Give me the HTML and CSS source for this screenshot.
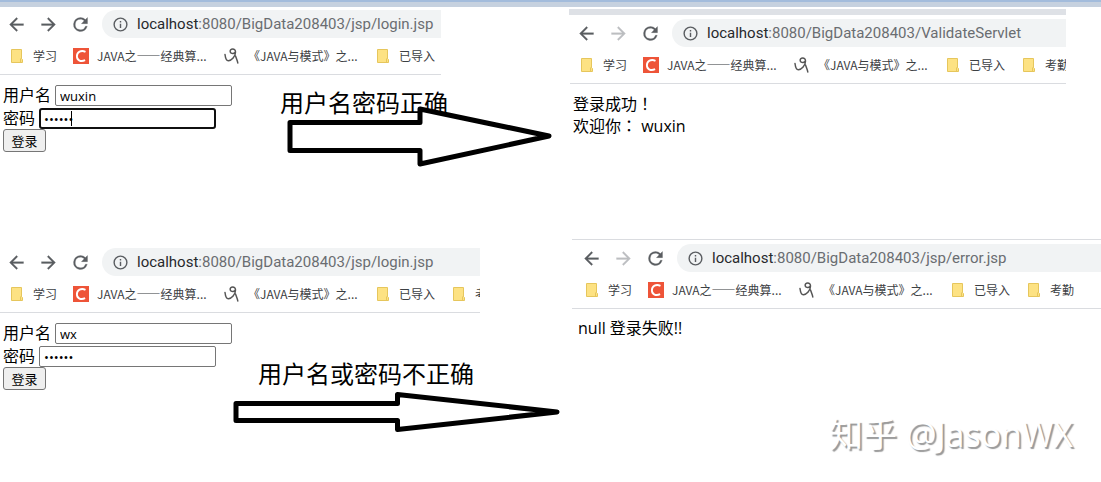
FILE: index.html
```
<!doctype html>
<html lang="zh">
    <head>
        <meta charset="utf-8"/>
        <title>登录验证</title>
        <link rel="stylesheet" href="styles.css">
    </head>
    <body>
        <!-- 公用图标 -->
        <svg class="sprite" aria-hidden="true">
            <symbol id="back" viewBox="0 0 24 24"><path d="M20 11H7.83l5.59-5.59L12 4l-8 8 8 8 1.41-1.41L7.83 13H20v-2z"/></symbol>
            <symbol id="forward" viewBox="0 0 24 24"><path d="M12 4l-1.41 1.41L16.17 11H4v2h12.17l-5.58 5.59L12 20l8-8z"/></symbol>
            <symbol id="reload" viewBox="0 0 24 24"><path d="M17.65 6.35A7.96 7.96 0 0 0 12 4a8 8 0 1 0 7.73 10h-2.08A6 6 0 1 1 12 6c1.66 0 3.14.69 4.22 1.78L13 11h7V4l-2.35 2.35z"/></symbol>
            <symbol id="info" viewBox="0 0 24 24"><path d="M11 7h2v2h-2zm0 4h2v6h-2zm1-9a10 10 0 1 0 0 20 10 10 0 0 0 0-20zm0 18a8 8 0 1 1 0-16 8 8 0 0 1 0 16z"/></symbol>
            <symbol id="folder" viewBox="0 0 16 16"><path d="M2.500 1.500h10v9l1 1v3h-11z" fill="#fde283" stroke="#e6c65c"/><path d="M11.500 14v-3l1-1" fill="none" stroke="#e6c65c"/></symbol>
            <symbol id="csdn" viewBox="0 0 16 16"><path d="M0 0h16v16H0z" fill="#ee5438"/><path d="M12.500 3.800C8 1.700 3.900 4 3.900 8.200c0 4.200 4 6 8.200 4" fill="none" stroke="#fff" stroke-width="1.900"/></symbol>
            <symbol id="eye" viewBox="0 0 16 16"><path d="M1 6.500c.5 4 1.500 6.500 3.500 6.300 3-.3 7-4 7-8.800C11.500 2.200 10.300 1 8.700 1 7 1 6 2.200 6.200 3.600c.2 1.500 1.600 2.200 3 1.900 1.200-.3 1.900-.9 2.200-1.600M11.500 8c.8 2.500 1.900 4.500 2.300 7" fill="none" stroke="#555" stroke-width="1.500" stroke-linecap="round"/></symbol>
        </svg>
        <header class="strip"></header>
        <main>
            <section class="cell">
                <div class="browser login-ok">
                    <nav class="toolbar">
                        <button class="tool" aria-label="后退"><svg><use href="#back"/></svg></button>
                        <button class="tool" aria-label="前进"><svg><use href="#forward"/></svg></button>
                        <button class="tool" aria-label="刷新"><svg><use href="#reload"/></svg></button>
                        <div class="address"><svg><use href="#info"/></svg><span><b>localhost</b>:8080/BigData208403/jsp/login.jsp</span></div>
                    </nav>
                    <nav class="bookmarks">
                        <a href="#"><svg><use href="#folder"/></svg>学习</a>
                        <a href="#"><svg><use href="#csdn"/></svg><span class="long">JAVA之——经典算...</span></a>
                        <a href="#"><svg><use href="#eye"/></svg><span class="long">《JAVA与模式》之...</span></a>
                        <a href="#"><svg><use href="#folder"/></svg>已导入</a>
                    </nav>
                    <form class="page">
                        <div class="field"><label for="name1">用户名</label> <input id="name1" type="text" value="wuxin"></div>
                        <div class="field"><label for="pwd1">密码</label> <span class="focus"><input id="pwd1" type="password" value="123456"></span></div>
                        <button class="submit" type="button">登录</button>
                    </form>
                </div>
                <figure class="note note-ok">
                    <figcaption>用户名密码正确</figcaption>
                    <svg width="272" height="64" viewBox="284 105 272 64"><path d="M290 122.500H420V109L549 136 420 164V150.500H290z"/></svg>
                </figure>
            </section>
            <section class="cell">
                <div class="browser success">
                    <nav class="toolbar">
                        <button class="tool" aria-label="后退"><svg><use href="#back"/></svg></button>
                        <button class="tool" aria-label="前进" disabled><svg><use href="#forward"/></svg></button>
                        <button class="tool" aria-label="刷新"><svg><use href="#reload"/></svg></button>
                        <div class="address"><svg><use href="#info"/></svg><span><b>localhost</b>:8080/BigData208403/ValidateServlet</span></div>
                    </nav>
                    <nav class="bookmarks">
                        <a href="#"><svg><use href="#folder"/></svg>学习</a>
                        <a href="#"><svg><use href="#csdn"/></svg><span class="long">JAVA之——经典算...</span></a>
                        <a href="#"><svg><use href="#eye"/></svg><span class="long">《JAVA与模式》之...</span></a>
                        <a href="#"><svg><use href="#folder"/></svg>已导入</a>
                        <a href="#"><svg><use href="#folder"/></svg>考勤</a>
                    </nav>
                    <div class="page">
                        <p>登录成功<span class="mark" lang="zh-TW">！</span></p>
                        <p>欢迎你<span class="mark" lang="zh-TW">：</span> wuxin</p>
                    </div>
                </div>
            </section>
            <section class="cell">
                <div class="browser login-fail">
                    <nav class="toolbar">
                        <button class="tool" aria-label="后退"><svg><use href="#back"/></svg></button>
                        <button class="tool" aria-label="前进"><svg><use href="#forward"/></svg></button>
                        <button class="tool" aria-label="刷新"><svg><use href="#reload"/></svg></button>
                        <div class="address"><svg><use href="#info"/></svg><span><b>localhost</b>:8080/BigData208403/jsp/login.jsp</span></div>
                    </nav>
                    <nav class="bookmarks">
                        <a href="#"><svg><use href="#folder"/></svg>学习</a>
                        <a href="#"><svg><use href="#csdn"/></svg><span class="long">JAVA之——经典算...</span></a>
                        <a href="#"><svg><use href="#eye"/></svg><span class="long">《JAVA与模式》之...</span></a>
                        <a href="#"><svg><use href="#folder"/></svg>已导入</a>
                        <a href="#"><svg><use href="#folder"/></svg>考勤</a>
                    </nav>
                    <form class="page">
                        <div class="field"><label for="name2">用户名</label> <input id="name2" type="text" value="wx"></div>
                        <div class="field"><label for="pwd2">密码</label> <input id="pwd2" type="password" value="123456"></div>
                        <button class="submit" type="button">登录</button>
                    </form>
                </div>
                <figure class="note note-fail">
                    <figcaption>用户名或密码不正确</figcaption>
                    <svg width="332" height="44" viewBox="230 390 332 44"><path d="M236 403.500H397.500V394.500L557 412 397.500 429.500V420.500H236z"/></svg>
                </figure>
            </section>
            <section class="cell">
                <div class="browser error">
                    <nav class="toolbar">
                        <button class="tool" aria-label="后退"><svg><use href="#back"/></svg></button>
                        <button class="tool" aria-label="前进" disabled><svg><use href="#forward"/></svg></button>
                        <button class="tool" aria-label="刷新"><svg><use href="#reload"/></svg></button>
                        <div class="address"><svg><use href="#info"/></svg><span><b>localhost</b>:8080/BigData208403/jsp/error.jsp</span></div>
                    </nav>
                    <nav class="bookmarks">
                        <a href="#"><svg><use href="#folder"/></svg>学习</a>
                        <a href="#"><svg><use href="#csdn"/></svg><span class="long">JAVA之——经典算...</span></a>
                        <a href="#"><svg><use href="#eye"/></svg><span class="long">《JAVA与模式》之...</span></a>
                        <a href="#"><svg><use href="#folder"/></svg>已导入</a>
                        <a href="#"><svg><use href="#folder"/></svg>考勤</a>
                    </nav>
                    <div class="page">
                        <p>null 登录失败!!</p>
                    </div>
                </div>
                <p class="watermark">知乎 @JasonWX</p>
            </section>
        </main>
    </body>
</html>
```
FILE: styles.css
```
* {
    margin: 0;
    padding: 0;
    box-sizing: border-box;
}
body {
    background-color: #fff;
    color: #000;
    font-family: "Noto Sans CJK SC", sans-serif;
    font-size: 16px;
}
.sprite {
    display: none;
}
.strip {
    height: 7px;
    background-color: #c6d1df;
    border-top: 2px solid #a3bcdc;
}
main {
    display: grid;
    grid-template-columns: 569fr 532fr;
    grid-template-rows: 232px auto;
}
.cell {
    position: relative;
    display: flex;
    flex-direction: column;
    min-width: 0;
}
.browser {
    overflow: hidden;
}
.login-ok {
    width: 77.5%;
    padding-top: 3px;
}
.login-fail {
    width: 84.4%;
    padding-top: 9px;
}
.success {
    width: 93.5%;
    margin-top: 2px;
    border-top: 6px solid #dee1e6;
    padding-top: 4px;
    padding-left: 1px;
}
.error {
    margin-left: 3px;
    border-top: 1px solid #dadce0;
    padding-top: 4px;
    padding-left: 3px;
}
.toolbar {
    display: flex;
    align-items: center;
    gap: 11px;
    padding-left: 6px;
    height: 28px;
}
.tool {
    flex: none;
    display: flex;
    border: 0;
    background: none;
}
.tool svg {
    width: 21px;
    height: 21px;
    fill: #5a5d61;
    stroke: #5a5d61;
    stroke-width: 0.3;
}
.tool:disabled svg {
    fill: #bcbec1;
    stroke: #bcbec1;
}
.address {
    flex: 1;
    display: flex;
    align-items: center;
    gap: 8px;
    height: 28px;
    padding-left: 10px;
    border-radius: 14px 0 0 14px;
    background-color: #f1f3f4;
    color: #6a6d71;
    font-family: Roboto, sans-serif;
    font-size: 15px;
    white-space: nowrap;
}
.address svg {
    width: 17px;
    height: 17px;
    fill: #5a5d61;
}
.address b {
    color: #27292c;
    font-weight: normal;
}
.bookmarks {
    display: flex;
    align-items: center;
    gap: 16px;
    height: 37px;
    padding-left: 9px;
    border-bottom: 1px solid #dadce0;
}
.error .bookmarks {
    margin-left: -3px;
    padding-left: 12px;
}
.bookmarks a {
    flex: none;
    display: flex;
    align-items: center;
    gap: 8px;
    color: #3c4043;
    font-size: 12px;
    line-height: 16px;
    text-decoration: none;
    white-space: nowrap;
}
.bookmarks svg {
    width: 16px;
    height: 16px;
}
.bookmarks .long {
    width: 111px;
}
.page {
    padding: 8px 3px;
    font-family: "Open Sans", "Noto Sans CJK SC", sans-serif;
}
.page p {
    padding-top: 1px;
    line-height: 20px;
}
/* 标点居中显示 */
.mark {
    font-family: "Noto Sans CJK TC", sans-serif;
}
.field {
    display: flex;
    align-items: flex-end;
    gap: 4px;
    height: 23px;
}
.field label {
    line-height: 23px;
    font-family: "Noto Sans CJK SC", sans-serif;
}
.field input {
    display: block;
    width: 177px;
    height: 21px;
    padding: 0 4px;
    border: 1px solid #767676;
    border-radius: 2px;
    font-family: "Open Sans", sans-serif;
    font-size: 13px;
}
.focus {
    position: relative;
    display: flex;
}
.field .focus input {
    padding: 0 3px;
    border: 2px solid #101010;
    border-radius: 3px;
}
/* 光标 */
.focus::after {
    content: "";
    position: absolute;
    left: 32px;
    top: 3px;
    width: 1px;
    height: 15px;
    background-color: #000;
}
.submit {
    display: block;
    width: 43px;
    height: 23px;
    border: 1px solid #767676;
    border-radius: 3px;
    background-color: #efefef;
    font-family: inherit;
    font-size: 13px;
    line-height: 20px;
}
/* 箭头说明压在浏览器窗口上面 */
.note {
    position: absolute;
}
.note figcaption {
    height: 28px;
    font-size: 24px;
    line-height: 28px;
    white-space: nowrap;
}
.note svg {
    display: block;
}
.note path {
    fill: #fff;
    stroke: #000;
    stroke-width: 5;
    stroke-linejoin: round;
}
.note-ok {
    left: 280px;
    top: 81px;
}
.note-ok svg {
    margin-top: -11px;
    margin-left: 4px;
}
.note-fail {
    left: 230px;
    top: 120px;
}
.note-fail figcaption {
    padding-left: 28px;
}
.note-fail svg {
    margin-top: 3px;
}
.watermark {
    margin-top: 64px;
    padding-right: 28px;
    color: #fff;
    font-family: "Open Sans", "Noto Sans CJK SC", sans-serif;
    font-size: 34px;
    line-height: 48px;
    text-align: right;
    text-shadow: 2px 2px 1px #999;
}
```
